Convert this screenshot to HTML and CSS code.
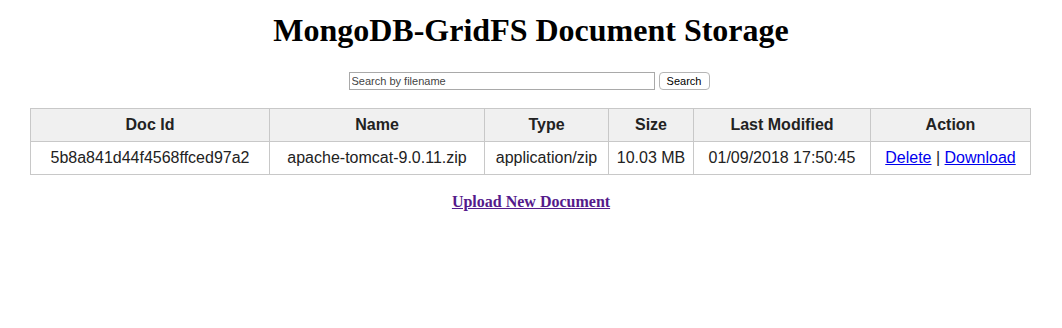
FILE: index.html
```html
<!DOCTYPE html>
<html lang="en">
<head>
    <meta charset="UTF-8">
    <title>MongoDB-GridFS Document Storage</title>
    <link rel="stylesheet" href="styles.css">
</head>
<body>
    <h1 class="title">MongoDB-GridFS Document Storage</h1>

    <form class="search-form">
        <input type="text" class="search-input" placeholder="Search by filename">
        <button type="submit" class="search-button">Search</button>
    </form>

    <table class="doc-table">
        <thead>
            <tr>
                <th class="col-id">Doc Id</th>
                <th class="col-name">Name</th>
                <th class="col-type">Type</th>
                <th class="col-size">Size</th>
                <th class="col-date">Last Modified</th>
                <th class="col-action">Action</th>
            </tr>
        </thead>
        <tbody>
            <tr>
                <td>5b8a841d44f4568ffced97a2</td>
                <td>apache-tomcat-9.0.11.zip</td>
                <td>application/zip</td>
                <td>10.03 MB</td>
                <td>01/09/2018 17:50:45</td>
                <td><a href="#">Delete</a> | <a href="#">Download</a></td>
            </tr>
        </tbody>
    </table>

    <p class="upload">
        <a href="#" class="upload-link">Upload New Document</a>
    </p>
</body>
</html>
```

FILE: styles.css
```css
body {
    margin: 0;
    padding: 0 30px;
    font-family: "Liberation Serif", "Times New Roman", serif;
    background: white;
    color: black;
}

.title {
    text-align: center;
    font-size: 32px;
    line-height: 37px;
    margin: 12px 0 22px;
}

.search-form {
    display: flex;
    justify-content: center;
    align-items: center;
    gap: 4px;
    margin: 0 0 18px;
}

.search-input {
    width: 306px;
    height: 18px;
    box-sizing: border-box;
    border: 1px solid #a9a9a9;
    padding: 1px 2px;
    font-family: "Liberation Sans", Arial, sans-serif;
    font-size: 11px;
}

.search-input::placeholder {
    color: #444;
}

.search-button {
    width: 51px;
    height: 18px;
    box-sizing: border-box;
    padding: 0;
    border: 1px solid #b5b5b5;
    border-radius: 4px;
    background: white;
    font-family: "Liberation Sans", Arial, sans-serif;
    font-size: 11px;
    margin: 1px 4px 0 0;
}

.doc-table {
    width: 1000px;
    table-layout: fixed;
    border-collapse: collapse;
    font-family: "Liberation Sans", Arial, sans-serif;
    font-size: 16px;
    color: #222;
}

.doc-table th,
.doc-table td {
    box-sizing: border-box;
    border: 1px solid #c8c8c8;
    padding: 7px 4px;
    line-height: 18px;
    text-align: center;
    white-space: nowrap;
}

.doc-table th {
    background: #f0f0f0;
    font-weight: bold;
}

.doc-table a {
    color: #0000ee;
}

.col-id { width: 239px; }
.col-name { width: 215px; }
.col-type { width: 124px; }
.col-size { width: 85px; }
.col-date { width: 177px; }
.col-action { width: 160px; }

.upload {
    text-align: center;
    margin: 18px 0 0;
    font-size: 16px;
    font-weight: bold;
}

.upload-link {
    color: #551a8b;
}
```
